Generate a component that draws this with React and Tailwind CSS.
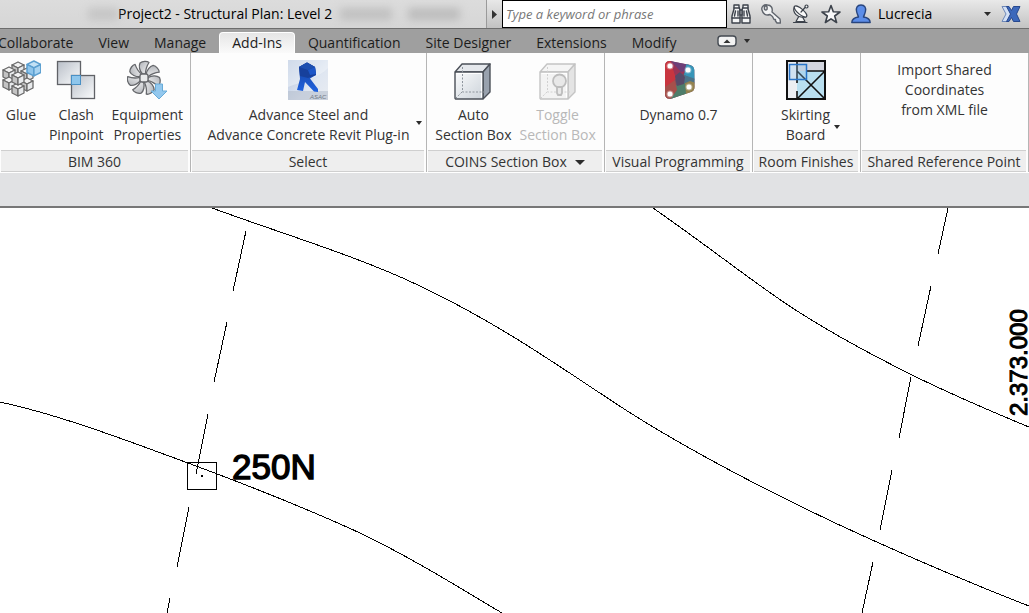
import React from "react";

const uiFont = "font-['Open_Sans','Noto_Sans',sans-serif]";

function Cube({ x, y, s = 1, blue = false }) {
  const line = blue ? "#5b9fd0" : "#6a6a6a";
  return (
    <g transform={`translate(${x} ${y}) scale(${s})`} stroke={line} strokeWidth="1.3" strokeLinejoin="round">
      <path d="M0 3 6 0 12 3 6 6Z" fill={blue ? "#c3e1f5" : "#f1f1f1"} />
      <path d="M0 3 6 6V13L0 10Z" fill={blue ? "#8fc4ea" : "#c4c4c4"} />
      <path d="M12 3 6 6V13L12 10Z" fill={blue ? "#a8d3f1" : "#e8eaec"} />
    </g>
  );
}

function GlueIcon() {
  return (
    <svg className="h-10 w-10" viewBox="0 0 40 40" aria-hidden="true">
      <Cube x={11} y={2} /><Cube x={20} y={8} /><Cube x={2} y={7} /><Cube x={20} y={18} /><Cube x={2} y={17} />
      <Cube x={11} y={23} /><Cube x={11} y={12} />
      <Cube x={26} y={1} s={1.15} blue />
    </svg>
  );
}

function ClashIcon() {
  return (
    <svg className="h-10 w-10" viewBox="0 0 40 40" aria-hidden="true">
      <defs>
        <linearGradient id="steel" x1="0" y1="0" x2="1" y2="1">
          <stop offset="0" stopColor="#b9bfc8" /><stop offset="1" stopColor="#fbfcfd" />
        </linearGradient>
      </defs>
      <rect x="1.5" y="1.5" width="23" height="23" fill="url(#steel)" stroke="#606267" strokeWidth="1.3" />
      <rect x="15.5" y="15.5" width="23" height="23" fill="url(#steel)" stroke="#606267" strokeWidth="1.3" />
      <rect x="15.5" y="15.5" width="9" height="9" fill="#8ec6ec" stroke="#4a90c4" />
    </svg>
  );
}

function FanIcon() {
  return (
    <svg className="h-10 w-10" viewBox="0 0 40 40" aria-hidden="true">
      <defs>
        <linearGradient id="blade" x1="0" y1="0" x2="1" y2="1">
          <stop offset="0" stopColor="#aeb1b6" /><stop offset="1" stopColor="#f6f6f7" />
        </linearGradient>
      </defs>
      <g fill="url(#blade)" stroke="#66686c" strokeWidth="1.3" strokeLinejoin="round">
        {[0, 51, 103, 154, 206, 257, 309].map((a) => (
          <path key={a} transform={`rotate(${a} 17 18)`} d="M15.5 14C12.500 11 11.500 6 13 3 15.500 1 20 .8 22 2.500 20 5.500 18.500 9 18.500 14Z" />
        ))}
        <rect x="13" y="14" width="8" height="8" rx="2" fill="#e9eaeb" />
      </g>
      <path d="M28.500 24H35.500V31H40L32 39 24 31H28.500Z" fill="#93c8ee" stroke="#68abd8" />
    </svg>
  );
}

function RevitIcon() {
  return (
    <svg className="h-10 w-10" viewBox="0 0 40 40" aria-hidden="true">
      <defs>
        <linearGradient id="sky" x1="0" y1="0" x2="1" y2="1">
          <stop offset="0" stopColor="#aebfdb" /><stop offset=".6" stopColor="#dfe6f1" /><stop offset="1" stopColor="#e9ecf1" />
        </linearGradient>
        <linearGradient id="leg" x1="0" y1="0" x2="0" y2="1">
          <stop offset="0" stopColor="#163f9c" /><stop offset="1" stopColor="#1f63e0" />
        </linearGradient>
      </defs>
      <rect width="40" height="40" fill="url(#sky)" />
      <path d="M0 27C14 22 32 17 40 8V0H0Z" fill="#f2f5fa" opacity=".5" />
      <path d="M0 31H40V40H0Z" fill="#b3bccb" opacity=".55" />
      <path d="M11 7 19 2.500 27 7 28 15 22 18.500 30 29 30 32 26 31.500 17 22 15 31 9 30 12 19Z" fill="url(#leg)" />
      <path d="M11 7 19 2.500 27 7 28 15 20 18 12 16Z" fill="#17409c" />
      <path d="M11 7 19 2.500 27 7 20 10Z" fill="#1d4fb0" />
      <path d="M20 10 27 7 28 14 22 15Z" fill="#1c56c8" />
      <text x="22" y="39" fontSize="6" fontStyle="italic" fill="#707986" fontFamily="Liberation Sans, sans-serif">ASAC</text>
    </svg>
  );
}

function BoxIcon({ bulb = false }) {
  const c = bulb ? "#c4c4c4" : "#4b5058";
  return (
    <svg className="h-10 w-10" viewBox="0 0 40 40" aria-hidden="true">
      <defs>
        <linearGradient id="glass" x1="0" y1="0" x2="1" y2="1">
          <stop offset="0" stopColor="#fafbfc" /><stop offset="1" stopColor="#ccd3da" />
        </linearGradient>
      </defs>
      <g strokeLinejoin="round">
        <path d="M2 12 9 4H37L30 12Z" fill={bulb ? "#f5f5f5" : "#e5e8ec"} stroke={c} strokeWidth="1.4" />
        <path d="M30 12 37 4V32L30 39Z" fill={bulb ? "#e4e4e4" : "#99a2ae"} stroke={c} strokeWidth="1.4" />
        <rect x="2" y="12" width="28" height="27" rx="1" fill={bulb ? "#f3f3f3" : "url(#glass)"} stroke={c} strokeWidth="1.4" />
        <path d="M3.500 13.500H28.500V37.500" fill="none" stroke="#fff" strokeWidth="1.2" />
        <path d="M9.500 7V32H33M9 32 3 38" fill="none" stroke={bulb ? "#d0d0d0" : "#8d949c"} strokeDasharray="2 1.500" />
      </g>
      {bulb && (
        <g fill="#e8e8e8" stroke="#bdbdbd" strokeWidth="1.8">
          <circle cx="21.500" cy="21" r="6.500" />
          <path d="M19 27H24V33L23 35H20L19 33Z" />
        </g>
      )}
    </svg>
  );
}

function DynamoIcon() {
  return (
    <svg className="h-10 w-10" viewBox="0 0 40 40" aria-hidden="true">
      <defs>
        <clipPath id="gem"><path d="M11 1 31 5Q35 6 35.300 10L35.500 27Q35.500 31 32 32L13 38.500Q6 40 6 34V6Q6 1 11 1Z" /></clipPath>
      </defs>
      <g clipPath="url(#gem)">
        <rect width="40" height="40" fill="#7b4a5e" />
        <path d="M0 0H12L17 18 6 36H0Z" fill="#c8353f" />
        <path d="M11 0 30 10 17 18Z" fill="#9a3456" />
        <path d="M11 0H31L30 10 22 12Z" fill="#6d3f78" />
        <path d="M28 0H40V22L25 15Z" fill="#3795b8" />
        <path d="M25 15 40 20 31 27 24 24Z" fill="#4b7389" />
        <path d="M24 24 31 21 40 24V34L24 38Z" fill="#94834f" />
        <path d="M17 25 26 23 27 34 10 40Z" fill="#4e7d6a" />
        <path d="M6 27 16 20 18 30 11 40H0Z" fill="#a5504b" />
        <path d="M16 16 21 12 26 17 25 24 18 26Z" fill="#574a68" />
      </g>
      {[[11, 6], [29, 10], [30, 27], [11, 34]].map(([x, y]) => (
        <circle key={`${x}-${y}`} cx={x} cy={y} r="2.500" fill="#fff" stroke="#fff" strokeOpacity=".35" strokeWidth="2" />
      ))}
    </svg>
  );
}

function SkirtingIcon() {
  return (
    <svg className="h-10 w-10" viewBox="0 0 40 40" aria-hidden="true">
      <rect width="40" height="40" fill="#d3d6df" />
      <rect x="1" y="1" width="10" height="38" fill="#eceef2" />
      <rect x="11" y="11" width="28" height="28" fill="#b9dff0" />
      <path d="M11 11 39 39M39 11 11 39M20 11H40M11 0V23M11 31V40" fill="none" stroke="#111" strokeWidth="1.6" />
      <rect x="3.500" y="4.500" width="17" height="15" fill="#8fc4ea" fillOpacity=".3" stroke="#2874c8" strokeWidth="1.5" />
      <rect x="1" y="1" width="38" height="38" fill="none" stroke="#111" strokeWidth="2" />
    </svg>
  );
}

const stroke = { stroke: "#3c424b", strokeWidth: 1.4, strokeLinejoin: "round", strokeLinecap: "round" };

function BinocularsIcon() {
  return (
    <svg className="h-5 w-5" viewBox="0 0 20 20" aria-hidden="true">
      <g {...stroke} fill="#f4f5f6">
        <path d="M3 1H8V3L9 6V19H1V12L3 5Z" /><path d="M12 1H17V5L19 12V19H11V6L12 3Z" />
        <path d="M9 6H11V11H9ZM3 4H8M12 4H17M1 14H9M11 14H19" />
        <path d="M4.500 7 3.500 12M7 7V12M13 7V12M15.500 7 16.500 12" fill="none" />
      </g>
    </svg>
  );
}
function KeyIcon() {
  return (
    <svg className="h-5 w-5" viewBox="0 0 20 20" aria-hidden="true">
      <path {...stroke} stroke="#60656d" fill="#f2f3f4" fillRule="evenodd" d="M1 6C0 3 3 0 6.500 1 10 1 12 4 11 8L19 15 19.500 19 16 19 14.500 17V15.500H13L11.500 12.500 9 10.500C5 12 2 10 1 6ZM3.500 4A1.400 1.400 0 1 0 6 4 1.400 1.400 0 1 0 3.500 4Z" />
    </svg>
  );
}
function DishIcon() {
  return (
    <svg className="h-5 w-5" viewBox="0 0 20 20" aria-hidden="true">
      <g {...stroke} strokeWidth="1.2" fill="#f1f2f3">
        <path d="M8 12 5 17.500H14L11 12Z" />
        <path d="M3.500 2.500C1 8 6 15.500 15.500 12.500Z" />
        <ellipse cx="9.500" cy="7.500" rx="7.800" ry="2.800" transform="rotate(40 9.500 7.500)" fill="#fafafa" />
        <path d="M10 8 14.500 3" /><circle cx="15.500" cy="2.500" r="1.500" />
        <path d="M2.500 18.500H16" />
      </g>
    </svg>
  );
}
function StarIcon() {
  return (
    <svg className="h-5 w-5" viewBox="0 0 20 20" aria-hidden="true">
      <path {...stroke} strokeWidth="1.6" fill="#f8f8f9" d="M10 1.500 12.300 7.700 19 8 13.700 12 15.600 18.500 10 14.800 4.400 18.500 6.300 12 1 8 7.700 7.700Z" />
    </svg>
  );
}
function UserIcon() {
  return (
    <svg className="h-5 w-5" viewBox="0 0 20 20" aria-hidden="true">
      <path d="M10 1C6 1 5 4 5.500 7 6 10 7 11 7.500 13 4 13.500 1 15 .8 18.500H19.200C19 15 16 13.500 12.500 13 13 11 14 10 14.500 7 15 4 14 1 10 1Z" fill="#5c8de8" stroke="#28457e" strokeWidth="1.4" strokeLinejoin="round" />
    </svg>
  );
}
function ExchangeIcon() {
  return (
    <svg className="h-5 w-5" viewBox="0 0 20 20" aria-hidden="true">
      <path d="M1 2.500H7L11 10 7 17.500H1L5 10Z" fill="#d3e0f5" stroke="#6e88b8" strokeLinejoin="round" />
      <path d="M12.500 2.500H19L15.500 10 19 17.500H12.500L10.500 13.500 8 17.500H5.500L9.500 10 5.500 2.500H8L10.500 6.500Z" fill="#3c68bb" stroke="#27488e" strokeLinejoin="round" />
    </svg>
  );
}

function Down({ className = "" }) {
  return (
    <svg className={`shrink-0 ${className}`} viewBox="0 0 10 5" preserveAspectRatio="none" aria-hidden="true">
      <path d="M0 0H10L5 5Z" fill="#2c2c2c" />
    </svg>
  );
}

function Tool({ icon, lines, disabled }) {
  return (
    <button type="button" disabled={disabled} className={`flex shrink-0 flex-col items-center gap-[5px] whitespace-nowrap leading-5 ${disabled ? "text-[#b8b8b8]" : "text-[#333]"}`}>
      {icon}
      <span>{lines.map((l) => <span key={l} className="block">{l}</span>)}</span>
    </button>
  );
}

function Panel({ title, menu, children }) {
  return (
    <section className="flex min-w-0 flex-col border-r border-[#b5b5b5] px-px">
      <div className="flex flex-1 items-start justify-center pt-[7px]">{children}</div>
      <h2 className="mr-px flex h-[22px] items-center justify-center gap-2 border-y border-[#cfcfcf] bg-[#eeeeee] pt-0.5 whitespace-nowrap text-[#333]">
        {title}
        {menu && <Down className="h-[5px] w-[10px]" />}
      </h2>
    </section>
  );
}

function TitleBar() {
  return (
    <header className="flex h-[29px] items-stretch border-b border-[#6d6d6d] bg-linear-to-b from-[#dcdcdc] to-[#d6d6d6]">
      <div className="flex flex-1 items-center overflow-hidden pl-[88px]">
        <div className="h-3 w-[30px] bg-[#b8b8b8] opacity-60 blur-[4px]" />
        <h1 className="whitespace-nowrap text-black">Project2 - Structural Plan: Level 2</h1>
        <div className="flex gap-4 pl-2 opacity-50 blur-[4px]">
          <div className="h-3 w-[52px] bg-[#a8a8a8]" />
          <div className="h-3 w-[52px] bg-[#a0a0a0]" />
        </div>
      </div>
      <button type="button" aria-label="Collapse search" className="flex w-4 items-center justify-center border-l border-[#9a9a9a] bg-linear-to-b from-[#e8e8e8] to-[#c2c2c2]">
        <svg className="h-[9px] w-[5px]" viewBox="0 0 5 9" aria-hidden="true"><path d="M0 0 5 4.500 0 9Z" fill="#333" /></svg>
      </button>
      <input aria-label="Search" placeholder="Type a keyword or phrase" className="w-[225px] border border-black bg-white px-[3px] text-[13px] italic outline-none placeholder:text-[#777]" />
      <div className="flex w-[302px] items-center bg-linear-to-b from-[#e9e9e9] to-[#c3c3c3] pr-2 pl-1">
        <div className="flex flex-1 items-center gap-[10px]">
          <button type="button" aria-label="Find"><BinocularsIcon /></button>
          <button type="button" aria-label="Subscription"><KeyIcon /></button>
          <button type="button" aria-label="Communication"><DishIcon /></button>
          <button type="button" aria-label="Favorites"><StarIcon /></button>
          <button type="button" className="flex items-center gap-[7px] text-black"><UserIcon />Lucrecia</button>
        </div>
        <button type="button" aria-label="Account menu" className="mr-[10px]"><Down className="h-[4px] w-[7px]" /></button>
        <button type="button" aria-label="Exchange apps"><ExchangeIcon /></button>
      </div>
    </header>
  );
}

const tabs = ["Collaborate", "View", "Manage", "Add-Ins", "Quantification", "Site Designer", "Extensions", "Modify"];

function TabBar() {
  return (
    <nav className="flex h-6 items-stretch bg-[#9f9f9f] pt-[3px]">
      <div className="-ml-[14px] flex gap-px">
        {tabs.map((t) => (
          <button key={t} type="button" className={`whitespace-nowrap text-[#1c1c1c] ${t === "Add-Ins" ? "rounded-t-sm border border-b-0 border-white bg-linear-to-b from-[#e6e6e6] to-[#fafafa] px-3" : "px-3"}`}>
            {t}
          </button>
        ))}
      </div>
      <button type="button" aria-label="Ribbon display" className="ml-7 flex items-center gap-[7px] pb-1">
        <svg className="h-3 w-5" viewBox="0 0 20 12" aria-hidden="true">
          <rect x="1" y="1" width="18" height="10" rx="3" fill="#f3f3f3" stroke="#444a52" strokeWidth="1.4" /><path d="M6.500 8H13.500L10 4.500Z" fill="#333" />
        </svg>
        <Down className="h-[4px] w-[6px]" />
      </button>
    </nav>
  );
}

function Ribbon() {
  return (
    <div className="grid h-[120px] grid-cols-[191fr_236fr_178fr_148fr_108fr_168fr] border-b border-white bg-[#fdfdfd]">
      <Panel title="BIM 360">
        <div className="flex w-full items-start justify-end gap-2 pr-[6px]">
          <Tool icon={<GlueIcon />} lines={["Glue"]} />
          <Tool icon={<ClashIcon />} lines={["Clash", "Pinpoint"]} />
          <Tool icon={<FanIcon />} lines={["Equipment", "Properties"]} />
        </div>
      </Panel>
      <Panel title="Select">
        <div className="flex items-center gap-[6px] pl-3">
          <Tool icon={<RevitIcon />} lines={["Advance Steel and", "Advance Concrete Revit Plug-in"]} />
          <Down className="mt-10 h-[4px] w-[6px]" />
        </div>
      </Panel>
      <Panel title="COINS Section Box" menu>
        <div className="flex gap-2">
          <Tool icon={<BoxIcon />} lines={["Auto", "Section Box"]} />
          <Tool disabled icon={<BoxIcon bulb />} lines={["Toggle", "Section Box"]} />
        </div>
      </Panel>
      <Panel title="Visual Programming"><Tool icon={<DynamoIcon />} lines={["Dynamo 0.7"]} /></Panel>
      <Panel title="Room Finishes">
        <div className="flex items-center gap-1 pl-2">
          <Tool icon={<SkirtingIcon />} lines={["Skirting", "Board"]} />
          <Down className="mt-12 h-[4px] w-[6px]" />
        </div>
      </Panel>
      <Panel title="Shared Reference Point"><Tool lines={["Import Shared", "Coordinates", "from XML file"]} /></Panel>
    </div>
  );
}

function Drawing() {
  return (
    <main className="flex-1 bg-white">
      <svg className="block w-full" viewBox="0 208 1029 405" role="img" aria-label="Level 2 plan">
        <g fill="none" stroke="#000" strokeWidth="1" shapeRendering="crispEdges">
          <path d="M212 208C280 233 360 257 420 286 500 324 560 367 618 405 690 452 790 503 870 539 930 566 980 587 1029 606" />
          <path d="M653 208C705 244 745 276 785 303 825 330 868 353 912 375 955 396 995 413 1029 427" />
          <path d="M0 402C60 415 120 438 188 463 250 486 310 510 360 533 410 557 455 585 502 613" />
          <path d="M246 231 233 291M227 322 214 382M208 414 196 474M189 507 177 567M170 598 167 613" />
          <path d="M948 208 938 254M931 286 918 346M911 377 899 438M892 470 880 530M873 562 862 613" />
          <rect x="187.500" y="462.500" width="29" height="27" rx="1" />
        </g>
        <rect x="201" y="475" width="2" height="2" />
        <g fontFamily="Liberation Sans, Arial, sans-serif" fill="#000" stroke="#000">
          <text x="232" y="479" fontSize="35" strokeWidth="1.4">250N</text>
          <text transform="translate(1027 416) rotate(-90)" fontSize="24" strokeWidth="1">2.373.000</text>
        </g>
      </svg>
    </main>
  );
}

export default function App() {
  return (
    <div className={`flex min-h-screen flex-col overflow-hidden bg-white text-sm ${uiFont}`}>
      <TitleBar />
      <TabBar />
      <Ribbon />
      <div className="h-[35px] border-b-2 border-[#777] bg-[#e1e2e4]" />
      <Drawing />
    </div>
  );
}
